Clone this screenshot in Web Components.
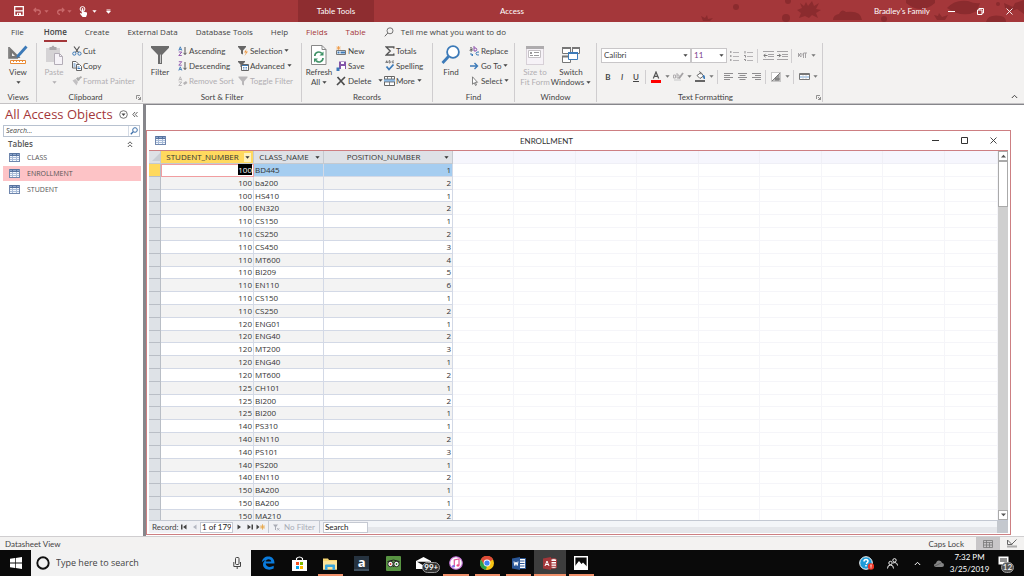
<!DOCTYPE html>
<html lang="en">
<head>
<meta charset="utf-8">
<title>Access - ENROLLMENT</title>
<style>
html,body{height:100%;margin:0}
body{--narrow:Lato,"Open Sans",sans-serif;font-family:"Open Sans","Noto Sans",sans-serif;font-size:8px;line-height:12px;color:#444;background:#fff;overflow:hidden}
</style>
</head>
<body>
<access-app></access-app>
<script>
const BASE = `
*{box-sizing:border-box}
button,input,select{font:inherit;color:inherit;margin:0;padding:0;border:0;background:none;border-radius:0;outline:0}
button{display:flex;align-items:center;justify-content:center;white-space:nowrap;cursor:default}
a{color:inherit;text-decoration:none}
svg{display:block;flex:none}
`;
function define(name, css, html, after) {
  customElements.define(name, class extends HTMLElement {
    connectedCallback() {
      if (this.shadowRoot) return;
      const root = this.attachShadow({mode: 'open'});
      root.innerHTML = '<style>' + BASE + css + '</style>' + (typeof html === 'function' ? html(this) : html);
      if (after) after(root, this);
    }
  });
}

/* ---------- icons: [width, height, markup] ---------- */
const SHEET = '<path d="M0 0h11v9H0z" fill="#f4f8fd"/><path d="M0 0h11v3H0z" fill="#56739f"/><path d="M0 4.500h11M0 6.500h11M3.500 3v6M7.500 3v6" stroke="#a9bcd8" fill="none"/><path d="M.5 0v9M10.500 0v9M0 8.500h11" stroke="#6f86ad" fill="none"/><path d="M1 1h2v1H1zM4 1h3v1H4zM8 1h2v1H8z" fill="#8ea7cd"/>';
const ICONS = {
  save:[10,10,'<path d="M.7.7h8.6v8.6H.7z" fill="none" stroke="#fff" stroke-width="1.3"/><path d="M1 4.2h8v1.3H1z" fill="#fff"/><path d="M3 6.8h4V9H3z" fill="#fff"/><path d="M4 7.5h1V9H4z" fill="#a4373a"/>'],
  undo:[9,8,'<path d="M3 1 1 3l2 2M1 3h4a3 2.3 0 0 1 0 4.5" fill="none" stroke="#c9696b" stroke-width="1.3"/>'],
  redo:[9,8,'<path d="m6 1 2 2-2 2M8 3H4a3 2.3 0 0 0 0 4.5" fill="none" stroke="#c9696b" stroke-width="1.3"/>'],
  touch:[9,11,'<circle cx="3.5" cy="3" r="2.4" fill="none" stroke="#fff"/><path d="M2.8 2.5q.8-.8 1.5 0v3L8 6.6v2L7 11H3.6L.8 7.4l1-.5 1 .8z" fill="#fff"/>'],
  more:[5,5,'<path d="M.5.5h4v1h-4zM0 2h5L2.500 4.800z" fill="currentColor"/>'],
  drop:[5,3,'<path d="M.4.3h4.2L2.500 2.700z" fill="currentColor"/>'],
  min:[7,7,'<path d="M0 3.500h7" stroke="currentColor"/>'],
  restore:[7,7,'<path d="M.5 2h4.500v4.500H.5zM2 2V.5h4.500V5H5" fill="none" stroke="currentColor"/>'],
  max:[7,7,'<path d="M.5.5h6v6h-6z" fill="none" stroke="currentColor"/>'],
  close:[7,7,'<path d="m.5.500 6 6m0-6-6 6" fill="none" stroke="currentColor" stroke-width=".9"/>'],
  tell:[10,10,'<circle cx="6" cy="3.800" r="3" fill="none" stroke="#666" stroke-width=".9"/><path d="M3.800 6 .8 9.300" stroke="#666"/>'],
  view:[20,20,'<path d="M1 2v11h9" fill="none" stroke="#777" stroke-width="1.6"/><path d="m1.500 2 11 11H1.500z" fill="#777"/><path d="m4 8 3 3H4z" fill="#f3f2f1"/><path d="M18.500 1.500 10 11" stroke="#3c7ab8" stroke-width="2.800"/><path d="m9.500 9.500 2 2L8.200 13z" fill="#3c7ab8"/><path d="M2.500 15.500h15v3h-15z" fill="#fff" stroke="#e88a35"/><path d="M5.500 15v2m3-2v2m3-2v2m3-2v2" stroke="#e88a35"/>'],
  paste:[20,20,'<path d="M2 3h14v14H2z" fill="#d5d3d5"/><path d="M5.500 2h2q1.500-3 3 0h2v3h-7z" fill="#aaa8aa"/><path d="M10.500 8.500h5l3 3v8h-8z" fill="#f6f3f8" stroke="#b3adb7"/><path d="M15.500 8.500v3h3" fill="none" stroke="#b3adb7"/>'],
  cut:[10,10,'<path d="m2 .5 4.500 6M7.500.500 3.500 6.500" stroke="#555" stroke-width="1.200"/><circle cx="2.300" cy="7.600" r="1.600" fill="none" stroke="#3c7ab8"/><circle cx="7.500" cy="7.600" r="1.600" fill="none" stroke="#3c7ab8"/>'],
  copy:[10,10,'<path d="M.5.5h3.500L6 2.500V7H.5z" fill="#fff" stroke="#666"/><path d="M4.500 3.500h3l2 2v4h-5z" fill="#fff" stroke="#666"/><path d="M5.500 6h2m-2 1.500h3M1.500 3h2m-2 2h2" stroke="#3c7ab8"/>'],
  painter:[10,10,'<path d="m.5 4.500 3-1.500L6 6 4.500 9.500z" fill="#c2c0c2"/><path d="m4 2.500 2-1.500 2 2.800-2 1.500z" fill="#aaa"/><path d="M7 2.500 9.500.8" stroke="#aaa" stroke-width="1.800"/>'],
  funnel:[20,20,'<path d="M1 1h18v1.800l-7 7.200v9H8v-9L1 2.800z" fill="#6c6c6c"/><path d="M10.500 9.500v8.500" stroke="#c9c9c9"/>'],
  asc:[10,10,'<path d="M.8 4.500 2.300.8l1.500 3.700M1.300 3.500h2" fill="none" stroke="#3c7ab8" stroke-width=".9"/><path d="M.8 6h3L.8 9.500h3" fill="none" stroke="#8d51ad" stroke-width=".9"/><path d="M7 1v7.500M5.500 6.800 7 8.500l1.500-1.700" fill="none" stroke="#555"/>'],
  desc:[10,10,'<path d="M.8.700h3L.8 4.200h3" fill="none" stroke="#8d51ad" stroke-width=".9"/><path d="m.8 9.500 1.500-3.700 1.500 3.700M1.300 8.500h2" fill="none" stroke="#3c7ab8" stroke-width=".9"/><path d="M7 1v7.500M5.500 6.800 7 8.500l1.500-1.700" fill="none" stroke="#555"/>'],
  unsort:[10,10,'<path d="M.8 4.500 2.300.8l1.500 3.700M1.300 3.500h2M.8 6h3L.8 9.500h3" fill="none" stroke="#b5b3b5" stroke-width=".9"/><path d="m5 7 3-2 1.500 2-3 2z" fill="#b5b3b5"/>'],
  selection:[11,10,'<path d="M0 0h8v1L5 4.500v4L3 7.500v-3L0 1z" fill="#666"/><path d="M8.500 3 6 6.500h2L6.500 10 10 5.500H8z" fill="#ef9b45"/>'],
  advanced:[11,10,'<path d="M0 0h7v1L4.500 3.500V6H2.500V3.500L0 1z" fill="#666"/><path d="M3.500 3.500h7v6h-7z" fill="#fff" stroke="#666"/><path d="M4 4h6v1H4z" fill="#3c7ab8"/><path d="M5 6.500h1.500m1 0h1.500M5 8h1.500m1 0h1.500" stroke="#3c7ab8" stroke-width=".8"/>'],
  toggle:[11,10,'<path d="M.5.500h9v1L6 5.500v4L4 8.500v-3L.5 1.500z" fill="#b9b7b9"/>'],
  refresh:[16,20,'<path d="M.5.5H11l4 4v15H.5z" fill="#fff" stroke="#888"/><path d="M11 .5v4h4" fill="none" stroke="#888"/><path d="M3.800 11a4 4 0 0 1 7-2.600M12 13a4 4 0 0 1-7 2.600" fill="none" stroke="#3f9166" stroke-width="1.700"/><path d="M12.500 6.500v4h-4zM3 17.500v-4h4z" fill="#3f9166"/>'],
  newrec:[11,10,'<path d="M.5 4.500h9v4h-9z" fill="#fff" stroke="#777"/><path d="M1.500 5.500h2v2h-2zM4.500 5.500H9v2H4.500z" fill="#3c7ab8"/><path d="M2.500 0v4M.5 2h4M1 .5l3 3M4 .5l-3 3" stroke="#ef9b45" stroke-width=".8"/>'],
  saverec:[11,10,'<path d="M3 .5h7V8H3z" fill="#8455a8"/><path d="M5 1h3v2H5zM5 5h4v3H5z" fill="#fff"/><path d="M.5 6.500h3V10h-3z" fill="#3c7ab8"/>'],
  del:[11,10,'<path d="m1.500 1 7 8m.500-8-8 8" stroke="#4c4c4c" stroke-width="1.700"/>'],
  sum:[10,10,'<path d="M8.800 2.500V1H1.200l4 4-4 4h7.600V7.500" fill="none" stroke="#555" stroke-width="1.400"/>'],
  spell:[10,11,'<path d="M.7 3 1.700.7 2.700 3M1 2.300h1.400M4 .7V3h1q1-.6 0-1.200Q5.700 1 5 .7zM9 1Q7 .4 7 1.900T9 2.700" fill="none" stroke="#555" stroke-width=".7"/><path d="m1.500 6.500 2.500 3L8.500 4.500" fill="none" stroke="#3c7ab8" stroke-width="1.800"/>'],
  grid:[11,10,'<path d="M.5.5h10v9H.5z" fill="#fff" stroke="#666"/><path d="M0 3h11v3H0z" fill="#8fbce6"/><path d="M0 3h11M0 6h11M5.500 6v4M3.500 0v3M7.500 0v3" stroke="#666" stroke-width=".8"/>'],
  find:[20,20,'<circle cx="12" cy="7" r="5.900" fill="#fff" stroke="#3c7ab8" stroke-width="1.800"/><path d="m7.500 11.500-6 6.500" stroke="#3c7ab8" stroke-width="2.800"/>'],
  replace:[11,10,'<path d="M1 2q2-1 2 .5V5Q1 5.500 1 4.200T3 3.500" fill="none" stroke="#555" stroke-width=".9"/><path d="M5 0v5h2q1.500-1.500 0-3H5" fill="none" stroke="#8d51ad"/><path d="M2 7v2h2m-1-1 1 1-1 1M10 6Q7 5.500 7 7.500T10 9" fill="none" stroke="#3c7ab8"/>'],
  goto:[11,10,'<path d="M1 5h7M5.500 2 8.500 5l-3 3" fill="none" stroke="#3c7ab8" stroke-width="1.400"/>'],
  cursor:[11,10,'<path d="M3.500.8v7.500l1.800-1.600 1.200 2.800 1-.5-1.200-2.700h2.200z" fill="#fff" stroke="#666" stroke-width=".8"/>'],
  sizeform:[18,19,'<path d="M.5.5h17v18H.5z" fill="#f6f2f7" stroke="#b9aebb" stroke-dasharray="1 1"/><path d="M0 0h18v3H0z" fill="#aeacae"/><path d="M2.500 4.500h12v7h-12z" fill="#fff" stroke="#c4c0c4"/><path d="M4 6h2v2H4zm0 3h3v1H4zm4-3h5v1H8zm0 3h5v1H8z" fill="#9a989a"/>'],
  windows:[20,18,'<path d="M1.500 1.500h8v6h-8zM11.500 1.500h7v6h-7zM1.500 10.500h8v6h-8z" fill="#fff" stroke="#777"/><path d="M1 1h9v2H1zM11 1h8v2h-8zM1 9.500h9v2H1z" fill="#777"/><path d="M7.500 6.500h9v7h-9z" fill="#fff" stroke="#3c7ab8"/><path d="M7 6h10v2H7z" fill="#3c7ab8"/>'],
  launcher:[5,5,'<path d="M.5 4V.5H4M2 2l2.500 2.500M4.500 2v2.500H2" fill="none" stroke="#777" stroke-width=".8"/>'],
  bullets:[9,10,'<path d="M0 1h1.500M0 5h1.500M0 9h1.500" stroke="#8f8d8f" stroke-width="1.400"/><path d="M3 1.500h6M3 5.500h6M3 9.500h6" stroke="#b5b3b5"/>'],
  numbers:[9,10,'<path d="M1 0v2.500M0 4.500h1.500v2M0 8.500h1.500v1.500" stroke="#8f8d8f" fill="none"/><path d="M3 1.500h6M3 5.500h6M3 9.500h6" stroke="#b5b3b5"/>'],
  outdent:[11,9,'<path d="M0 .5h11M5 3.500h6M5 5.500h6M0 8.500h11" stroke="#a5a3a5"/><path d="M4.500 4.500H1m1.500-1.700L.800 4.500l1.700 1.700" fill="none" stroke="#777"/>'],
  indent:[11,9,'<path d="M0 .5h11M5 3.500h6M5 5.500h6M0 8.500h11" stroke="#a5a3a5"/><path d="M0 4.500h3.500M2 2.800l1.700 1.700L2 6.200" fill="none" stroke="#777"/>'],
  ltr:[9,7,'<path d="M.5 1v4M3 1v4L1 3zM5.500 6V1H9M7.500 1v5M6 1.500h-1v2h1" fill="none" stroke="#a5a3a5"/>'],
  fontcolor:[10,12,'<path d="M2.300 7.500 5 1l2.700 6.500M3.300 5.300h3.400" fill="none" stroke="#555" stroke-width="1.200"/><path d="M0 9h10v3H0z" fill="#f00"/>'],
  highlight:[11,10,'<path d="M.5 3h2v3h-2zM4 1v5h2V3H4" fill="none" stroke="#b0aeb0"/><path d="M10 1 6 6.500" stroke="#a5a3a5" stroke-width="1.800"/><path d="M1 8h7" stroke="#ddd" stroke-width="2"/>'],
  bucket:[11,11,'<path d="m2 4.500 4-3 2.500 3.500-3.500 2.500z" fill="#fff" stroke="#666"/><path d="M4 .5q2 0 2 3" fill="none" stroke="#666" stroke-width=".8"/><path d="M8.500 4q1.500 1 1 4-1.500-1-1-4" fill="#3c7ab8" stroke="#3c7ab8"/><path d="M0 9h10v2H0z" fill="#666"/>'],
  al:[9,8,'<path d="M0 .5h9M0 2.500h6M0 4.500h9M0 6.500h6" stroke="#8f8d8f"/>'],
  ac:[9,8,'<path d="M0 .5h9M1.500 2.500h6M0 4.500h9M1.500 6.500h6" stroke="#8f8d8f"/>'],
  ar:[9,8,'<path d="M0 .5h9M3 2.500h6M0 4.500h9M3 6.500h6" stroke="#8f8d8f"/>'],
  gridlines:[10,10,'<path d="M.5.5h9v9h-9z" fill="#fff" stroke="#999" stroke-dasharray="1 1"/><path d="M9 1v8H1z" fill="#bbb"/><path d="M1 9 9 1M5 5v4M7 3v6M4 7h5" stroke="#666" stroke-width=".8"/>'],
  altrow:[11,8,'<path d="M.5.5h10v6H.5z" fill="#fff" stroke="#777"/><path d="M1 3h9v2H1z" fill="#b8d3ee"/><path d="M1 1h9v1H1z" fill="#777"/><path d="M4 2v4M7 2v4" stroke="#ccc" stroke-width=".8"/>'],
  chevup:[7,5,'<path d="M.8 4 3.500 1.300 6.200 4" fill="none" stroke="currentColor"/>'],
  circledrop:[9,9,'<circle cx="4.500" cy="4.500" r="3.800" fill="none" stroke="#666" stroke-width=".9"/><path d="M2.500 3.500h4l-2 2.500z" fill="#444"/>'],
  dblleft:[6,7,'<path d="M3 1 .8 3.500 3 6M5.500 1 3.300 3.500 5.500 6" fill="none" stroke="#555" stroke-width=".9"/>'],
  dblup:[6,7,'<path d="M.8 3 3 .8 5.200 3M.8 6 3 3.800 5.200 6" fill="none" stroke="#444" stroke-width=".9"/>'],
  lens:[8,8,'<circle cx="5" cy="3" r="2.300" fill="#fff" stroke="#3c6ea8"/><path d="M3.200 4.800.8 7.200" stroke="#3c6ea8" stroke-width="1.300"/>'],
  sheet:[11,9,SHEET],
  corner:[8,8,'<path d="M8 0v8H0z" fill="#c9ced5"/>'],
  first:[6,6,'<path d="M0 .5h1.500v5H0zM5.500.500v5L2 3z" fill="#444"/>'],
  prev:[6,6,'<path d="M4.500.500v5L1 3z" fill="#b5b8c2"/>'],
  next:[6,6,'<path d="M1.500.500v5L5 3z" fill="#444"/>'],
  last:[6,6,'<path d="M4.500.500H6v5H4.500zM.5.500v5L4 3z" fill="#444"/>'],
  newnav:[9,6,'<path d="M.500.500v5L3.500 3z" fill="#444"/><path d="M6.500.300v5.400M4 3h5M4.800 1.300l3.400 3.400m0-3.400L4.800 4.700" stroke="#e8a74a" stroke-width=".9"/>'],
  nofilter:[7,7,'<path d="M0 .500h5L3 3v3H2V3z" fill="#a9acb5"/><path d="m4 4 2.500 2.500m0-2.500L4 6.500" stroke="#a9acb5" stroke-width=".8"/>'],
  scrollup:[5,4,'<path d="M0 3.500h5L2.500.800z" fill="#555"/>'],
  scrolldown:[5,4,'<path d="M0 .5h5L2.500 3.200z" fill="#555"/>'],
  dsview:[10,8,'<path d="M.5.500h9v7h-9zM.5 2.500h9M.5 5h9M3.500.500v7M6.500 2.500v5" fill="none" stroke="#777" stroke-width=".8"/>'],
  design:[10,9,'<path d="M.5 1v4.500H5zM9.500.500 4.500 5.500" fill="none" stroke="#666"/><path d="M.5 7.500h9" stroke="#666" stroke-width="2" stroke-dasharray="1 1"/>'],
  start:[12,12,'<path d="m0 1.700 5-.7v4.600H0zM5.700.900 12 0v5.600H5.700zM0 6.400h5V11l-5-.7zM5.700 6.400H12V12l-6.300-.9z" fill="#fff"/>'],
  cortana:[14,14,'<circle cx="7" cy="7" r="5.700" fill="none" stroke="#111" stroke-width="1.900"/>'],
  mic:[8,12,'<rect x="2.500" y=".5" width="3.500" height="7" rx="1" fill="none" stroke="#444"/><path d="M.8 5v4.500h6.700V5M4.200 9.500V12" fill="none" stroke="#444"/>'],
  edge:[14,14,'<path d="M.8 6.300C1.400 2.500 4 .5 7.300.5c4 0 6.200 2.700 6.200 7H4.700c.2 3.800 5 4.300 8 2.300v2.800C8 15 2 13.300 2 8.500 2 6.500 3 5 5 4 3.500 4 1.700 5 .8 6.300zM4.800 5.500h5.400C10 2.500 5.400 2.500 4.800 5.500z" fill="#0a7bdc"/>'],
  store:[15,15,'<path d="M0 4h15v11H0z" fill="#fff"/><path d="M4.500 4V2.500q3-3 6 0V4" fill="none" stroke="#fff" stroke-width="1.100"/><path d="M4 6h3v3H4z" fill="#f25022"/><path d="M8 6h3v3H8z" fill="#7fba00"/><path d="M4 10h3v3H4z" fill="#00a4ef"/><path d="M8 10h3v3H8z" fill="#ffb900"/>'],
  explorer:[14,13,'<path d="M0 1.500h5l1 1.500h8v9.500H0z" fill="#f7d673"/><path d="M0 4h14v8.500H0z" fill="#fbe39a"/><path d="M2 13V8.500q0-1 1-1h8q1 0 1 1V13H9.500v-3h-5v3z" fill="#38a5dd"/>'],
  trip:[15,15,'<rect width="15" height="15" rx="1" fill="#589442"/><circle cx="4.500" cy="8" r="2.700" fill="#fff" stroke="#222"/><circle cx="10.500" cy="8" r="2.700" fill="#fff" stroke="#222"/><circle cx="4.500" cy="8" r=".9" fill="#d33"/><circle cx="10.500" cy="8" r=".9" fill="#272"/><path d="M1.500 5.500q6-3 12 0M7 10l.5 1 .5-1" fill="none" stroke="#222"/>'],
  mail:[16,12,'<path d="M0 4 7.500 0 15 4v8H0z" fill="#fff"/><path d="m1 4.800 6.500 3.700L14 4.800z" fill="#111"/>'],
  itunes:[14,14,'<circle cx="7" cy="7" r="6.300" fill="#fff" stroke="#c36fd8" stroke-width="1.100"/><path d="M5.300 10V4l4.700-1v6" fill="none" stroke="#e0559a" stroke-width="1.200"/><ellipse cx="4.500" cy="10.200" rx="1.500" ry="1.200" fill="#7d6ee8"/><ellipse cx="9" cy="9.400" rx="1.500" ry="1.200" fill="#ee4b81"/>'],
  chrome:[14,14,'<circle cx="7" cy="7" r="7" fill="#f9c513"/><path d="M7 7 .9 3.500A7 7 0 0 1 13.100 3.500z" fill="#dd4b39"/><path d="M7 3.500h6.100A7 7 0 0 0 .9 3.500L4 9z" fill="#dd4b39"/><path d="M.9 3.500 4.200 9 7 10.500 5.800 13.900A7 7 0 0 1 .9 3.500z" fill="#2ba24c"/><circle cx="7" cy="7" r="3.400" fill="#fff"/><circle cx="7" cy="7" r="2.600" fill="#4285f4"/>'],
  word:[14,13,'<path d="M6.500 1.500h7v10h-7z" fill="#fff" stroke="#2b5797"/><path d="M8 4h4.500M8 6.500h4.500M8 9h4.500" stroke="#2b5797"/><path d="M0 1.500 8 0v13l-8-1.500z" fill="#2b5797"/><path d="m2 4.500.8 4L4 5l1.200 3.500.8-4" fill="none" stroke="#fff"/>'],
  access:[14,13,'<path d="M8 2q5.500-1 5.500 1v7q0 2-5.500 1z" fill="#fff" stroke="#a4373a"/><path d="M8 4.500h5M8 7h5M8 9.300h5" stroke="#a4373a"/><path d="M0 1.500 8 0v13l-8-1.500z" fill="#a4373a"/><path d="M2 9 4 4l2 5M2.700 7.500h2.600" fill="none" stroke="#fff"/>'],
  photos:[14,14,'<path d="M.7.700h12.600v12.600H.7z" fill="#0a0a0a" stroke="#fff" stroke-width="1.400"/><path d="m1 10 4-5 2.500 3L9 6.500l4 4V13H1z" fill="#fff"/>'],
  help:[15,14,'<circle cx="7" cy="7" r="6.300" fill="#1d9bd8" stroke="#fff"/><path d="M5 5.500q0-2 2-2t2 1.800Q9 6.500 7 7.700M7 9v1.500" fill="none" stroke="#fff" stroke-width="1.500"/><circle cx="12" cy="10.500" r="3.200" fill="#e32"/><path d="M12 8.500v2.300m0 .6v.9" stroke="#fff"/>'],
  people:[11,11,'<circle cx="3.500" cy="5" r="1.700" fill="none" stroke="#eee"/><path d="M.5 10.500q0-3.500 3-3.500t3 3.500" fill="none" stroke="#eee"/><circle cx="7.500" cy="2.300" r="1.700" fill="none" stroke="#eee"/><path d="M6 5q4-1.500 4.500 2.500" fill="none" stroke="#eee"/>'],
  cloud:[10,7,'<path d="M2 7Q0 7 0 5.200T2 3.500Q2.500.5 5 .5T8 3q2 0 2 2T8 7z" fill="#858585"/><path d="m1 6 6-3" stroke="#555" stroke-width=".8"/>'],
  note:[11,11,'<path d="M.5.500h10v8H7l-2 2.300V8.500H.5z" fill="#fff"/><path d="M2 3h7M2 5h7" stroke="#222"/>']
};
customElements.define('app-icon', class extends HTMLElement {
  connectedCallback() {
    if (this.shadowRoot) return;
    const [w, h, d] = ICONS[this.getAttribute('name')];
    this.attachShadow({mode: 'open'}).innerHTML =
      `<style>:host{display:block;flex:none}svg{display:block}</style><svg width="${w}" height="${h}" viewBox="0 0 ${w} ${h}" aria-hidden="true">${d}</svg>`;
  }
});
const icon = n => `<app-icon name="${n}"></app-icon>`;

/* ---------- title bar ---------- */
define('title-bar', `
:host{display:grid;grid-template-columns:1fr auto 1fr;height:22px;background:#a4373a;color:#fff;position:relative;line-height:22px;font-family:var(--narrow)}
.art{position:absolute;right:0;top:0;height:22px;width:324px}
.left,.right{display:flex;position:relative}
.qat{display:flex;align-items:center;width:298px;padding-left:13px}
.qat button{height:22px}
.save{width:11px}.undo{width:11px;margin-left:8px}.redo{width:11px;margin-left:5px}.touch{width:11px;margin-left:5px}
.arr{width:7px;color:#fff}.dim{color:#c9696b}
.touch+.arr{margin-left:2px}
.more{width:7px;margin-left:7px}
.tools{width:76px;text-align:center;background:#8e2d30}
.app{position:relative}
.right{justify-content:flex-end}
.user{margin-right:7px}
.win{width:29px}`,
`<svg class="art" viewBox="0 0 324 22" fill="#8b2b2e"><circle cx="36" cy="7" r="3"/><circle cx="88" cy="1" r="3"/><circle cx="86" cy="18" r="4"/><path d="m1 16 4 2 2-3 1 4 5-1-3 3H3zM100 3l4 3 2-4 2 4 4-5 2 5 5-3-3 6 5 1-5 3 2 5-6-3-3 3-4-2-6 2 2-5-4-3 5-2zM133 20q0-5 6-6 3-6 7-2 15-2 16 8zM206 0h29v3q-14 12-29 0zM234 15l4 1 1-3 3 4 6-2-3 5h-8zM247 8q8-9 21-7 7 3 12 2l-3 8q-14 8-30-3zM286 22q2-8 15-6 5 1 5 6zM304 3l9 4 2-4 9-3v14l-7-5-5 2-7-3z"/><circle cx="184" cy="19" r="3"/><circle cx="298" cy="4" r="2"/></svg>
<div class="left"><div class="qat"><button class="save" aria-label="Save">${icon('save')}</button><button class="undo" aria-label="Undo">${icon('undo')}</button><button class="arr dim" aria-label="Undo list">${icon('drop')}</button><button class="redo" aria-label="Redo">${icon('redo')}</button><button class="arr dim" aria-label="Redo list">${icon('drop')}</button><button class="touch" aria-label="Touch mode">${icon('touch')}</button><button class="arr" aria-label="Touch options">${icon('drop')}</button><button class="more" aria-label="Customize toolbar">${icon('more')}</button></div><div class="tools">Table Tools</div></div>
<div class="app">Access</div>
<div class="right"><span class="user">Bradley's Family</span><button class="win" aria-label="Minimize">${icon('min')}</button><button class="win" aria-label="Restore">${icon('restore')}</button><button class="win" aria-label="Close">${icon('close')}</button></div>`);

/* ---------- ribbon tabs ---------- */
define('ribbon-tabs', `
:host{display:flex;align-items:center;gap:18px;height:20px;padding:0 11px;background:#f3f2f1;color:#444;line-height:18px}
a{white-space:nowrap}
.file{margin-right:2px}
.on{font-weight:600;border-bottom:2px solid #a4373a;line-height:16px;padding-top:2px}
.ctx{color:#a4373a}
button{gap:7px}`,
`<a class="file" href="#file">File</a><a class="on" href="#home">Home</a><a href="#create">Create</a><a href="#external">External Data</a><a href="#tools">Database Tools</a><a href="#help">Help</a><a class="ctx" href="#fields">Fields</a><a class="ctx" href="#table">Table</a><button>${icon('tell')}<span>Tell me what you want to do</span></button>`);

/* ---------- ribbon ---------- */
define('big-button', `
:host{display:block;flex:none}
button{flex-direction:column;justify-content:flex-start;width:100%;height:48px;padding-top:2px;line-height:10px}
.pic{height:20px;display:flex;align-items:center;margin-bottom:2px}
.l2{display:flex;align-items:center;gap:2px;height:10px}
:host([off]) button{color:#b1aeb1}`,
el => `<button><span class="pic">${icon(el.getAttribute('icon'))}</span><span>${el.getAttribute('l1')}</span><span class="l2">${el.getAttribute('l2') || ''}${el.hasAttribute('menu') ? icon('drop') : ''}</span></button>`);
define('small-button', `
:host{display:block}
button{height:15px;gap:1px}
.pic{width:11px;display:flex;justify-content:center}
button>app-icon{margin-left:1px}
:host([off]) button{color:#b1aeb1}
:host([gap]) button>app-icon{margin-left:6px}`,
el => `<button><span class="pic">${icon(el.getAttribute('icon'))}</span><span>${el.textContent}</span>${el.hasAttribute('menu') ? icon('drop') : ''}</button>`);
define('ribbon-group', `
:host{display:flex;flex-direction:column;border-right:1px solid #cfcdcf;margin:1px 0;min-width:0}
.body{display:flex;flex:1}
.foot{display:grid;grid-template-columns:1fr auto;align-items:center;height:10px;line-height:10px;text-align:center}
.foot button{width:8px;height:10px}
::slotted(.col){display:flex;flex-direction:column;flex:none}`,
el => `<div class="body"><slot></slot></div><div class="foot"><span>${el.getAttribute('label')}</span>${el.hasAttribute('launcher') ? `<button aria-label="${el.getAttribute('label')} options">${icon('launcher')}</button>` : ''}</div>`);
define('text-format', `
:host{display:block;flex:1;padding:5px 0 0 4px}
.row{display:flex;align-items:center;height:15px}
.row+.row{margin-top:6px}
.box{position:relative;display:flex;height:15px;border:1px solid #c8c6c8;background:#fff}
.box select{appearance:none;width:100%;padding-left:2px;line-height:13px;background:#fff}
.box app-icon{position:absolute;right:2px;top:5px}
.font{width:90px}.size{width:36px}.size select{color:#7b3c8c}
button{height:14px;width:14px}
.n{width:8px;color:#777}
i.s{width:1px;height:14px;background:#d0ced0;margin:0 3px 0 2px}
b{font-weight:700}em,u{font-weight:600}`,
`<div class="row"><span class="box font"><select aria-label="Font"><option>Calibri</option></select>${icon('drop')}</span><span class="box size"><select aria-label="Font size"><option>11</option></select>${icon('drop')}</span><button aria-label="Bullets">${icon('bullets')}</button><button aria-label="Numbering">${icon('numbers')}</button><i class="s"></i><button aria-label="Decrease indent">${icon('outdent')}</button><button aria-label="Increase indent">${icon('indent')}</button><i class="s"></i><button aria-label="Text direction">${icon('ltr')}</button><button class="n" aria-label="Direction list">${icon('drop')}</button></div>
<div class="row"><button aria-label="Bold"><b>B</b></button><button aria-label="Italic"><em>I</em></button><button aria-label="Underline"><u>U</u></button><i class="s"></i><button aria-label="Font color">${icon('fontcolor')}</button><button class="n" aria-label="Font color list">${icon('drop')}</button><button aria-label="Highlight">${icon('highlight')}</button><button class="n" aria-label="Highlight list">${icon('drop')}</button><button aria-label="Background color">${icon('bucket')}</button><button class="n" aria-label="Background list">${icon('drop')}</button><i class="s"></i><button aria-label="Align left">${icon('al')}</button><button aria-label="Center">${icon('ac')}</button><button aria-label="Align right">${icon('ar')}</button><i class="s"></i><button aria-label="Gridlines">${icon('gridlines')}</button><button class="n" aria-label="Gridlines list">${icon('drop')}</button><i class="s"></i><button aria-label="Alternate row color">${icon('altrow')}</button><button class="n" aria-label="Row color list">${icon('drop')}</button></div>`);
define('app-ribbon', `
:host{display:grid;grid-template-columns:37px 106px 159px 131px 82px 82px 226px 1fr;height:61px;background:#f3f2f1;color:#444;font-family:var(--narrow)}
.end{display:flex;align-items:flex-end;justify-content:flex-end;padding:0 6px 2px}
.end button{width:8px;height:9px}
.c1{width:61px}.c3{width:48px}
.w34{width:34px}.w36{width:36px}.sz{margin-left:2px}`,
`<ribbon-group label="Views"><big-button class="w36" icon="view" l1="View" menu></big-button></ribbon-group>
<ribbon-group label="Clipboard" launcher><big-button class="w34" icon="paste" l1="Paste" menu off></big-button><div class="col"><small-button icon="cut">Cut</small-button><small-button icon="copy">Copy</small-button><small-button icon="painter" off>Format Painter</small-button></div></ribbon-group>
<ribbon-group label="Sort &amp; Filter"><big-button class="w34" icon="funnel" l1="Filter"></big-button><div class="col c1"><small-button icon="asc">Ascending</small-button><small-button icon="desc">Descending</small-button><small-button icon="unsort" off>Remove Sort</small-button></div><div class="col"><small-button icon="selection" menu>Selection</small-button><small-button icon="advanced" menu>Advanced</small-button><small-button icon="toggle" off>Toggle Filter</small-button></div></ribbon-group>
<ribbon-group label="Records"><big-button class="w34" icon="refresh" l1="Refresh" l2="All" menu></big-button><div class="col c3"><small-button icon="newrec">New</small-button><small-button icon="saverec">Save</small-button><small-button icon="del" menu gap>Delete</small-button></div><div class="col"><small-button icon="sum">Totals</small-button><small-button icon="spell">Spelling</small-button><small-button icon="grid" menu>More</small-button></div></ribbon-group>
<ribbon-group label="Find"><big-button class="w36" icon="find" l1="Find"></big-button><div class="col"><small-button icon="replace">Replace</small-button><small-button icon="goto" menu>Go To</small-button><small-button icon="cursor" menu>Select</small-button></div></ribbon-group>
<ribbon-group label="Window"><big-button class="w36 sz" icon="sizeform" l1="Size to" l2="Fit Form" off></big-button><big-button class="w36" icon="windows" l1="Switch" l2="Windows" menu></big-button></ribbon-group>
<ribbon-group label="Text Formatting" launcher><text-format></text-format></ribbon-group>
<div class="end"><button aria-label="Collapse ribbon">${icon('chevup')}</button></div>`);

/* ---------- navigation pane ---------- */
define('nav-pane', `
:host{display:block;width:143px;background:#fff;color:#555}
header{display:flex;align-items:center;height:20px;padding:0 2px 0 5px;color:#a4373a}
h1{margin:0;font-size:13px;font-weight:400;line-height:20px;flex:1;white-space:nowrap}
header button{width:12px;height:12px}
.search{display:flex;align-items:center;height:12px;margin:1px 3px 0;border:1px solid #b8c2d0}
.search input{flex:1;min-width:0;padding:0 2px;font-style:italic;font-size:7px;line-height:10px;height:10px}
.search input::placeholder{color:#444;opacity:1}
.search button{width:11px;height:10px;border-left:1px solid #d5dce6}
.grp{display:flex;align-items:center;width:100%;justify-content:space-between;height:12px;padding:0 10px 0 8px;font-weight:600;margin:1px 0 0}
ul{list-style:none;margin:0;padding:0 2px 0 3px;display:grid;gap:1px}
li a{display:flex;align-items:center;gap:7px;height:15px;padding-left:6px;font-size:7px}
li a.on{background:#fdc3c6}`,
`<header><h1>All Access Objects</h1><button aria-label="Choose category">${icon('circledrop')}</button><button aria-label="Collapse pane">${icon('dblleft')}</button></header>
<div class="search"><input type="text" placeholder="Search..." aria-label="Search objects"><button aria-label="Search">${icon('lens')}</button></div>
<button class="grp"><span>Tables</span>${icon('dblup')}</button>
<ul><li><a href="#class">${icon('sheet')}CLASS</a></li><li><a class="on" href="#enrollment">${icon('sheet')}ENROLLMENT</a></li><li><a href="#student">${icon('sheet')}STUDENT</a></li></ul>`);

/* ---------- datasheet ---------- */
const ROWS = `100 BD445 1,100 ba200 2,100 HS410 1,100 EN320 2,110 CS150 1,110 CS250 2,110 CS450 3,110 MT600 4,110 BI209 5,110 EN110 6,110 CS150 1,110 CS250 2,120 ENG01 1,120 ENG40 2,120 MT200 3,120 ENG40 1,120 MT600 2,125 CH101 1,125 BI200 2,125 BI200 1,140 PS310 1,140 EN110 2,140 PS101 3,140 PS200 1,140 EN110 2,150 BA200 1,150 BA200 1,150 MA210 2`.split(',').map(r => r.split(' '));
const BLANKS = '<td class="x"></td>'.repeat(9);
define('data-sheet', `
:host{display:block;min-width:0;overflow:hidden}
table{table-layout:fixed;border-collapse:separate;border-spacing:0;width:100%;height:calc(100% + 3px);color:#333;line-height:10px}
th,td{padding:0 1px;border-right:1px solid #d3d9e6;border-bottom:1px solid #d3d9e6;font-weight:400;white-space:nowrap;overflow:hidden}
thead tr{height:13px}
thead th{background:#dee1e6;border-color:#c5c9cf;padding:0}
thead .x{background:#f6f6fd;border-color:#efeff6}
.x{border-color:#f5f5f9}
tbody tr:nth-child(even) td:not(.x){background:#f3f3f3}
tbody th{background:#dee2e7;border-color:#b9bec6}
.n{text-align:right}
.h{display:flex;align-items:center;width:100%;height:12px;padding-right:2px}
.h span{flex:1;text-align:center}
.h app-icon{padding:3px 1px;color:#333}
thead .k{background:#ffd95e}
.k app-icon{background:#fff2bf}
tbody .cur th{background:#ffd95e}
tbody .cur td:not(.x){background:#a5cdf0}
tbody .cur td.edit{background:#fff;border-color:#f19da0;box-shadow:inset 1px 1px #f19da0}
mark{background:#000;color:#fff}
.c{display:flex;justify-content:flex-end}`,
`<table><colgroup><col style="width:12px"><col style="width:93px"><col style="width:70px"><col style="width:129px">${'<col style="width:61px"><col style="width:62px">'.repeat(4)}<col></colgroup>
<thead><tr><th><span class="c">${icon('corner')}</span></th>${['STUDENT_NUMBER','CLASS_NAME','POSITION_NUMBER'].map((t, i) => `<th${i ? '' : ' class="k"'}><button class="h"><span>${t}</span>${icon('drop')}</button></th>`).join('')}${BLANKS}</tr></thead>
<tbody>${ROWS.map((r, i) => `<tr${i ? '' : ' class="cur"'}><th></th><td class="n${i ? '' : ' edit'}">${i ? r[0] : `<mark>${r[0]}</mark>`}</td><td>${r[1]}</td><td class="n">${r[2]}</td>${BLANKS}</tr>`).join('')}</tbody></table>`);

define('record-nav', `
:host{display:flex;height:13px;background:#f0f1f5;border-top:1px solid #c3c8d2;font-family:var(--narrow)}
.nav{display:flex;align-items:center;padding-left:3px;line-height:11px}
.nav>span{width:26px}
button{width:11px;height:12px}
input{height:11px;line-height:11px;background:#fff;border:1px solid #c5c9d2;padding:0 1px;color:#222}
.pos{width:33px}
.flt{width:52px;gap:4px;color:#a9acb5;border-left:1px solid #c5c9d2;border-right:1px solid #c5c9d2;margin:0 3px 0 2px}
.find{width:45px}
.track{flex:1;background:linear-gradient(#f3f5f8 50%,#e4e6ea 50%)}
.end{width:11px;background:#c4c8ce}`,
`<div class="nav"><span>Record:</span><button aria-label="First record">${icon('first')}</button><button aria-label="Previous record">${icon('prev')}</button><input class="pos" type="text" value="1 of 179" aria-label="Current record"><button aria-label="Next record">${icon('next')}</button><button aria-label="Last record">${icon('last')}</button><button aria-label="New record">${icon('newnav')}</button><button class="flt">${icon('nofilter')}No Filter</button><input class="find" type="text" value="Search" aria-label="Search records"></div><div class="track"></div><div class="end"></div>`);

define('sheet-window', `
:host{display:flex;flex-direction:column;border:1px solid #cd7f82;background:#fff;padding:0 2px 1px}
header{display:flex;align-items:center;height:20px;border-bottom:1px solid #cd7f82;flex:none;color:#333}
header app-icon{margin:0 6px}
header h2{flex:1;text-align:center;font-family:var(--narrow);font-size:8px;font-weight:400;margin:0}
header button{width:29px;height:19px}
header button app-icon{margin:0}
.main{display:grid;grid-template-columns:1fr 10px;flex:1;min-height:0}
.bar{background:#cfcfcf;display:flex;flex-direction:column}
.bar button{height:10px;border:1px solid #aaa;background:#fff}
.thumb{height:46px;border:1px solid #aaa;background:#fff;margin-bottom:auto}`,
`<header>${icon('sheet')}<h2>ENROLLMENT</h2><button aria-label="Minimize window">${icon('min')}</button><button aria-label="Maximize window">${icon('max')}</button><button aria-label="Close window">${icon('close')}</button></header>
<div class="main"><data-sheet></data-sheet><div class="bar"><button aria-label="Scroll up">${icon('scrollup')}</button><div class="thumb"></div><button aria-label="Scroll down">${icon('scrolldown')}</button></div></div>
<record-nav></record-nav>`);

/* ---------- status bar ---------- */
define('status-bar', `
:host{display:flex;align-items:center;height:14px;background:#f3f2f1;border-top:1px solid #d0ced0;padding-left:5px;font-family:var(--narrow)}
span{flex:1}
.caps{flex:none;margin-right:12px}
button{width:24px;height:13px}
.on{background:#c8c6c8}`,
`<span>Datasheet View</span><span class="caps">Caps Lock</span><button class="on" aria-label="Datasheet View">${icon('dsview')}</button><button aria-label="Design View">${icon('design')}</button>`);

/* ---------- taskbar ---------- */
define('task-bar', `
:host{display:flex;height:26px;background:#0a0a0a;color:#fff}
.start{width:31px}
.search{display:flex;align-items:center;width:220px;background:#f2f2f2;padding:0 10px 0 5px;gap:6px;color:#444}
.search input{flex:1;min-width:0;font-size:9px}
.search input::placeholder{color:#444;opacity:1}
.apps{display:grid;grid-template-columns:repeat(11,1fr);width:346px;padding-left:1px}
.apps button{position:relative;height:26px;margin:0 3px}
.run{border-bottom:2px solid #f0906a;padding-top:2px}
.apps .on{background:#3d3d3d;margin:0}
.amz{width:15px;height:15px;background:#263340;font-size:13px;line-height:12px;font-weight:700;border-bottom:2px solid #40505e}
.count{position:absolute;border-radius:7px;background:#333;border:1px solid #999;color:#fff;font-family:var(--narrow)}
.mail{right:-3px;top:12px;line-height:9px;padding:0 1px;font-weight:700}
.tray{margin-left:auto;display:flex;align-items:center}
.tray button{height:26px;width:26px;position:relative}
.tray .up{width:25px}.tray .cl{width:18px}
.tray .clock{flex-direction:column;width:43px;line-height:12px;font-family:var(--narrow)}
.tray .bell{width:30px;margin-right:3px;padding-right:5px;padding-bottom:4px}
.tray .bell .count{right:7px;top:12px;width:13px;height:11px;line-height:9px;background:#555}`,
`<button class="start" aria-label="Start">${icon('start')}</button>
<div class="search">${icon('cortana')}<input type="text" placeholder="Type here to search" aria-label="Type here to search"><button aria-label="Voice search">${icon('mic')}</button></div>
<div class="apps"><button aria-label="Edge">${icon('edge')}</button><button aria-label="Store">${icon('store')}</button><button class="run" aria-label="File Explorer">${icon('explorer')}</button><button aria-label="Amazon"><span class="amz">a</span></button><button aria-label="TripAdvisor">${icon('trip')}</button><button aria-label="Mail">${icon('mail')}<span class="count mail">99+</span></button><button class="run" aria-label="iTunes">${icon('itunes')}</button><button class="run" aria-label="Chrome">${icon('chrome')}</button><button class="run" aria-label="Word">${icon('word')}</button><button class="run on" aria-label="Access">${icon('access')}</button><button class="run" aria-label="Photos">${icon('photos')}</button></div>
<div class="tray"><button aria-label="Help">${icon('help')}</button><button aria-label="People">${icon('people')}</button><button class="up" aria-label="Show hidden icons">${icon('chevup')}</button><button class="cl" aria-label="OneDrive">${icon('cloud')}</button><button class="clock"><span>7:32 PM</span><span>3/25/2019</span></button><button class="bell" aria-label="Notifications">${icon('note')}<span class="count">12</span></button></div>`);

/* ---------- shell ---------- */
define('access-app', `
:host{display:flex;flex-direction:column;height:100vh}
.work{display:grid;grid-template-columns:auto 1fr;flex:1;min-height:0;border-top:1px solid #c4c2c4}
.mdi{display:flex;border-left:3px solid #86868b;border-top:1px solid #86868b;padding:25px 13px 1px 0;min-width:0;min-height:0;background:#fff}
sheet-window{flex:1;min-width:0}`,
`<title-bar></title-bar><ribbon-tabs></ribbon-tabs><app-ribbon></app-ribbon>
<div class="work"><nav-pane></nav-pane><div class="mdi"><sheet-window></sheet-window></div></div>
<status-bar></status-bar><task-bar></task-bar>`);
</script>
</body>
</html>
